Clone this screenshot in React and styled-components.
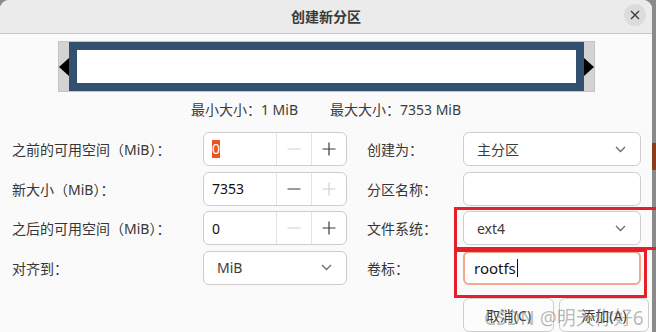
import React from 'react';
import styled, { createGlobalStyle } from 'styled-components';

const GlobalStyle = createGlobalStyle`
  html, body {
    margin: 0;
    padding: 0;
  }
  body {
    width: 656px;
    height: 332px;
    overflow: hidden;
    font-family: "Noto Sans", "Noto Sans CJK SC", sans-serif;
    background: #858585;
  }
  * {
    box-sizing: border-box;
  }
`;

const LEFT_ROWS = [
  { label: '之前的可用空间（MiB）：', value: '0', selected: true, minus: false, plus: true },
  { label: '新大小（MiB）：', value: '7353', minus: true, plus: false },
  { label: '之后的可用空间（MiB）：', value: '0', minus: false, plus: true }
];

function Chevron() {
  return (
    <svg width="11" height="7" viewBox="0 0 11 7">
      <polyline points="1,1 5.5,5.5 10,1" fill="none" stroke="#6a6a6a" strokeWidth="1.3" />
    </svg>
  );
}

function MinusIcon() {
  return (
    <svg width="14" height="14" viewBox="0 0 14 14">
      <line x1="0.5" y1="7" x2="13.5" y2="7" stroke="currentColor" strokeWidth="1.2" />
    </svg>
  );
}

function PlusIcon() {
  return (
    <svg width="14" height="14" viewBox="0 0 14 14">
      <line x1="0.5" y1="7" x2="13.5" y2="7" stroke="currentColor" strokeWidth="1.2" />
      <line x1="7" y1="0.5" x2="7" y2="13.5" stroke="currentColor" strokeWidth="1.2" />
    </svg>
  );
}

function App() {
  return (
    <>
      <GlobalStyle />
      <Page>
        <Dialog>
          <Header>
            <Title>创建新分区</Title>
            <CloseButton>
              <svg width="10" height="10" viewBox="0 0 10 10">
                <path d="M1 1 L9 9 M9 1 L1 9" stroke="#3a3a3a" strokeWidth="1.3" />
              </svg>
            </CloseButton>
          </Header>

          <BarTrack>
            <Arrow $dir="left" />
            <PartitionBlock />
            <Arrow $dir="right" />
          </BarTrack>

          <SizeInfo>
            <span>最小大小：1 MiB</span>
            <span>最大大小：7353 MiB</span>
          </SizeInfo>

          <Form>
            <FieldGrid $cols="191px 144px">
              { LEFT_ROWS.map(({ label, value, selected, minus, plus }, idx) => (
                <React.Fragment key={ `spin-${ idx }` }>
                  <Label>{ label }</Label>
                  <SpinBox>
                    <SpinEntry>
                      { selected ? <Selection>{ value }</Selection> : value }
                    </SpinEntry>
                    <SpinButton $enabled={ minus }><MinusIcon /></SpinButton>
                    <SpinButton $enabled={ plus }><PlusIcon /></SpinButton>
                  </SpinBox>
                </React.Fragment>
              )) }
              <Label>对齐到：</Label>
              <Combo>
                <span>MiB</span>
                <Chevron />
              </Combo>
            </FieldGrid>

            <FieldGrid $cols="96px 178px">
              <Label>创建为：</Label>
              <Combo>
                <span>主分区</span>
                <Chevron />
              </Combo>
              <Label>分区名称：</Label>
              <TextEntry />
              <Label>文件系统：</Label>
              <Combo>
                <span>ext4</span>
                <Chevron />
              </Combo>
              <Label>卷标：</Label>
              <TextEntry $focused>
                rootfs<Caret />
              </TextEntry>
            </FieldGrid>
          </Form>

          <ActionRow>
            <ActionButton $width={ 91 }>取消(C)</ActionButton>
            <ActionButton $width={ 90 }>添加(A)</ActionButton>
          </ActionRow>
        </Dialog>

        <Highlight $left={ 454 } $top={ 207 } $width={ 215 } $height={ 43 } />
        <Highlight $left={ 454 } $top={ 249 } $width={ 193 } $height={ 49 } />
        <Watermark>CSDN @明天你好6</Watermark>
      </Page>
    </>
  );
}

const Page = styled.div`
  position: relative;
  width: 656px;
  height: 332px;
  background: linear-gradient(to bottom, #8a8a8a 0 143px, #8b3c1d 143px 170px, #8a8a8a 170px);
`;

const Dialog = styled.div`
  width: 652px;
  height: 332px;
  display: flex;
  flex-direction: column;
  background: #fafafa;
  border-radius: 9px 9px 0 0;
  overflow: hidden;
  color: #3c3c3c;
`;

const Header = styled.div`
  height: 34px;
  flex-shrink: 0;
  display: grid;
  grid-template-columns: 1fr auto 1fr;
  align-items: center;
  background: #ebebeb;
  border-bottom: 1px solid #c8c8c8;
`;

const Title = styled.div`
  grid-column: 2;
  font-size: 14px;
  font-weight: 700;
  color: #3a3a3a;
  margin-top: -2px;
`;

const CloseButton = styled.div`
  grid-column: 3;
  justify-self: end;
  margin: -3px 6px 0 0;
  width: 22px;
  height: 22px;
  border-radius: 50%;
  background: #dcdcdc;
  display: flex;
  align-items: center;
  justify-content: center;
`;

const BarTrack = styled.div`
  width: 537px;
  height: 51px;
  margin: 7px auto 0;
  display: flex;
  align-items: center;
  background: #d3d3d3;
  border: 1px solid #c4c4c4;
`;

const Arrow = styled.div`
  width: 0;
  height: 0;
  border-top: 9.5px solid transparent;
  border-bottom: 9.5px solid transparent;
  ${ ({ $dir }) => $dir === 'left'
    ? 'border-right: 10px solid #000;'
    : 'border-left: 10px solid #000;' }
`;

const PartitionBlock = styled.div`
  flex: 1;
  align-self: stretch;
  background: #fff;
  border: 8px solid #33506e;
`;

const SizeInfo = styled.div`
  margin-top: 10px;
  display: flex;
  justify-content: center;
  gap: 32px;
  font-size: 14px;
  line-height: 16px;
  color: #3c3c3c;
`;

const Form = styled.div`
  margin-top: 14px;
  padding-left: 12px;
  display: flex;
  gap: 20px;
`;

const FieldGrid = styled.div`
  display: grid;
  grid-template-columns: ${ ({ $cols }) => $cols };
  grid-auto-rows: 34px;
  row-gap: 5.5px;
`;

const Label = styled.div`
  align-self: center;
  font-size: 14px;
  color: #363636;
  white-space: nowrap;
`;

const SpinBox = styled.div`
  display: flex;
  background: #fff;
  border: 1px solid #cdcdcd;
  border-radius: 6px;
  overflow: hidden;
`;

const SpinEntry = styled.div`
  flex: 1;
  display: flex;
  align-items: center;
  padding-left: 8px;
  font-size: 14px;
  color: #111;
`;

const Selection = styled.span`
  background: #e95420;
  color: #fff;
  line-height: 18px;
`;

const SpinButton = styled.div`
  width: 35px;
  display: flex;
  align-items: center;
  justify-content: center;
  border-left: 1px solid #e4e4e4;
  color: ${ ({ $enabled }) => $enabled ? '#3a3a3a' : '#cfcfcf' };
`;

const Combo = styled.div`
  display: flex;
  align-items: center;
  justify-content: space-between;
  padding: 0 14px 0 13px;
  background: #fff;
  border: 1px solid #cdcdcd;
  border-radius: 6px;
  font-size: 14px;
  color: #3c3c3c;
`;

const TextEntry = styled.div`
  display: flex;
  align-items: center;
  padding-left: ${ ({ $focused }) => $focused ? '9px' : '10px' };
  background: #fff;
  border: ${ ({ $focused }) => $focused ? '2px solid #f4a68e' : '1px solid #cdcdcd' };
  border-radius: 6px;
  font-size: 15px;
  color: #111;
`;

const Caret = styled.span`
  display: inline-block;
  width: 1px;
  height: 18px;
  margin-left: 1px;
  background: #111;
`;

const ActionRow = styled.div`
  margin-top: 13px;
  padding-right: 3px;
  display: flex;
  justify-content: flex-end;
  gap: 5px;
`;

const ActionButton = styled.div`
  width: ${ ({ $width }) => $width }px;
  height: 34px;
  flex-shrink: 0;
  display: flex;
  align-items: center;
  justify-content: center;
  background: #fcfcfc;
  border: 1px solid #cdcdcd;
  border-radius: 6px;
  font-size: 14px;
  color: #3c3c3c;
`;

const Highlight = styled.div`
  position: absolute;
  left: ${ ({ $left }) => $left }px;
  top: ${ ({ $top }) => $top }px;
  width: ${ ({ $width }) => $width }px;
  height: ${ ({ $height }) => $height }px;
  border: 3px solid #e5202a;
  pointer-events: none;
`;

const Watermark = styled.div`
  position: absolute;
  left: 484px;
  top: 303px;
  font-size: 19px;
  color: rgba(100, 100, 100, 0.45);
  white-space: nowrap;
  pointer-events: none;
`;

export default App;
